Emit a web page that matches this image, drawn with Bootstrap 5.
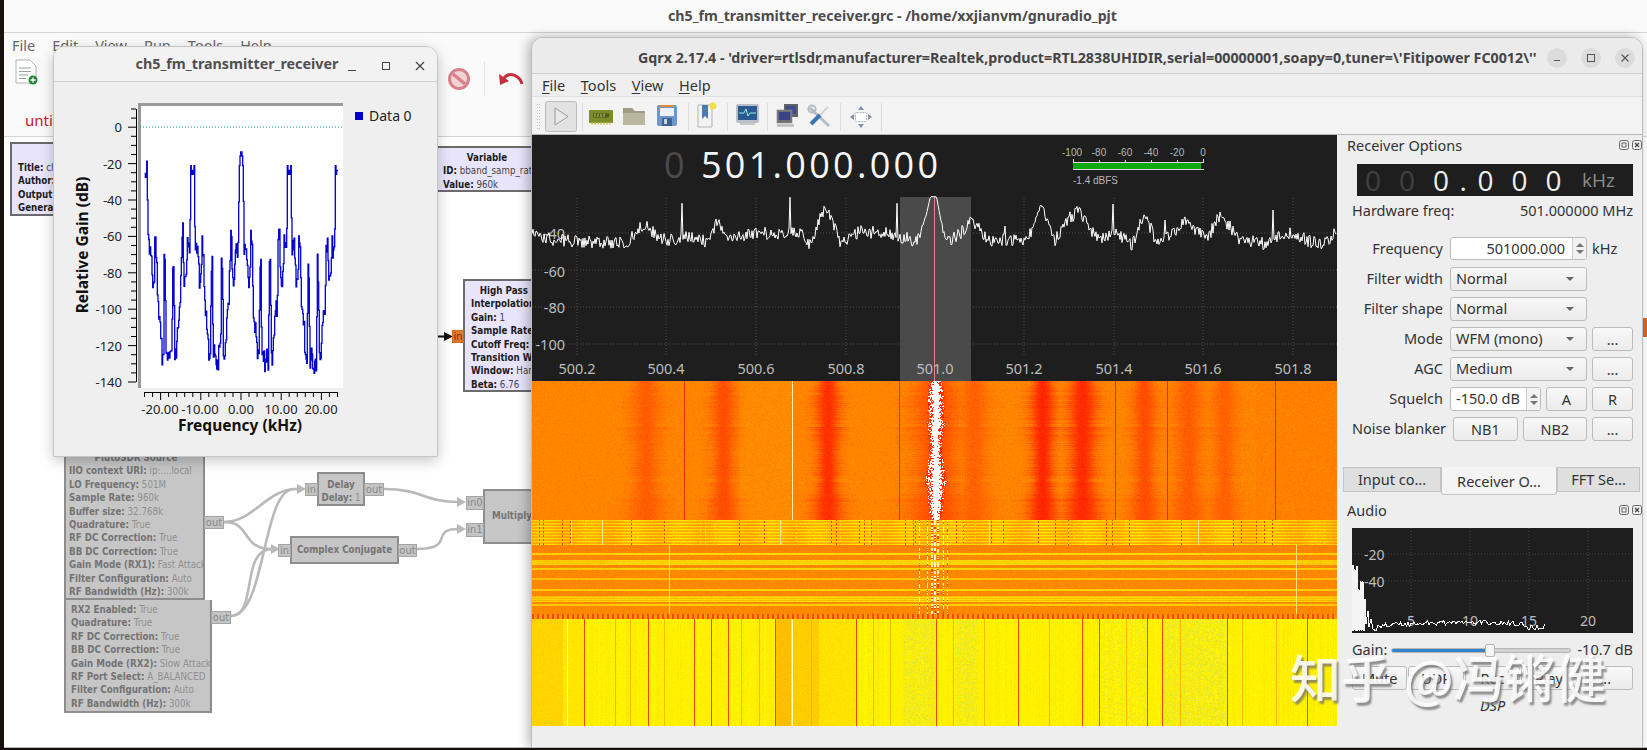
<!DOCTYPE html>
<html lang="en">
<head>
<meta charset="utf-8">
<title>Gqrx and GNU Radio</title>
<link href="https://cdn.jsdelivr.net/npm/bootstrap@5.3.0/dist/css/bootstrap.min.css" rel="stylesheet">
<style>
html,body{margin:0;height:100%;overflow:hidden;background:#18100f}
body{width:1647px;height:750px;position:relative;font-family:"Noto Sans",sans-serif;color:#3c3c3c}
/* desktop windows */
.win-grc{position:absolute;left:4px;top:0;width:1643px;height:748px;background:#fff;border-bottom:1px solid #bbb}
.win-plot{position:absolute;left:53px;top:46px;width:385px;height:411px;background:#efefef;border:1px solid #c6c6c6;border-radius:12px 12px 0 0;box-shadow:0 4px 14px rgba(0,0,0,.22);overflow:hidden}
.win-qrx{position:absolute;left:531px;top:37px;width:1112px;height:711px;background:#eeeeee;border:1px solid #bdbdbd;border-radius:12px 12px 0 0;box-shadow:-3px 0 12px rgba(0,0,0,.28);overflow:hidden;color:#2e2e2e}
/* grc chrome */
.grc-title{height:33px;background:#fafafa;border-bottom:1px solid #d4d4d4;font-size:14.2px;font-weight:700;color:#4c4c4c;padding-left:134px}
.grc-menu{height:25px;background:#fafafa;font-size:14.5px;color:#666;padding-left:8px;gap:17px}
.grc-tools{height:46px;background:#fafafa;padding-left:11px}
.grc-tabs{height:33px;background:#fafafa;border-bottom:1px solid #d4d4d4;padding-left:21px;font-size:15px;color:#c7162b}
.grc-canvas{position:relative;flex:1 1 auto;background:#fff;overflow:hidden}
.grc-sep{position:absolute;left:480px;top:62px;width:1px;height:34px;background:#e2e2e2}
.grc-ico{position:absolute}
.ico-stop{left:443px;top:67px}
.ico-undo{left:494px;top:70px}
/* flow graph blocks (free canvas; coordinates are relative to the canvas, which starts at 4,138) */
.gblock{position:absolute;background:#e8e4fb;border:2px solid #6b6b6b;font:9.7px/13.4px "DejaVu Sans Condensed","DejaVu Sans",sans-serif;font-stretch:condensed;color:#444;white-space:nowrap;overflow:hidden;padding:0 6px}
.gblock b{color:#1c1c1c}
.gblock.off{background:#c6c6c6;border-color:#8d8d8d;color:#8f8f8f}
.gblock.off b{color:#747474}
.gport{position:absolute;font:10px/11px "DejaVu Sans",sans-serif;text-align:center;background:#c4c4c4;border:1px solid #a4a4a4;color:#8a8a8a}
.gport.live{background:#e07a2f;border-color:#c96a22;color:#7a2b00}
.b-title{left:6px;top:5px;width:120px;height:74px;padding-top:17px}
.b-var{left:431px;top:9px;width:104px;height:46px;padding-top:3px;padding-left:6px;text-align:left}
.b-hp{left:459px;top:142px;width:111px;height:113px;padding-top:3px}
.b-src1{left:60px;top:309px;width:141px;height:154px;padding:3px 0 0 3px}
.b-src2{left:60px;top:463px;width:148px;height:113px;padding:3px 0 0 5px;border-top:0}
.b-delay{left:313px;top:335px;width:48px;height:34px;padding:4px 0 0;text-align:center}
.b-conj{left:286px;top:399px;width:109px;height:28px;padding:5px 0 0;text-align:center}
.b-mult{left:479px;top:352px;width:100px;height:55px;padding:18px 0 0 7px}
.centerline{display:block;text-align:center}
.p-hp{left:448px;top:193px;width:12px;height:13px}
.p-o1{left:200px;top:379px;width:20px;height:13px}
.p-o2{left:207px;top:474px;width:20px;height:13px}
.p-di{left:301px;top:346px;width:13px;height:13px}
.p-do{left:360px;top:346px;width:20px;height:13px}
.p-ci{left:274px;top:407px;width:13px;height:13px}
.p-co{left:394px;top:407px;width:19px;height:13px}
.p-m0{left:462px;top:359px;width:18px;height:14px}
.p-m1{left:462px;top:386px;width:18px;height:14px}
.wires{position:absolute;left:0;top:0}
.sliver{position:absolute;left:1643px;top:318px;width:4px;height:19px;background:#d9662a}
/* qt plot window */
.plot-head{height:35px;background:#f2f2f2;border-bottom:1px solid #d2d2d2;position:relative;font-size:14.3px;font-weight:700;color:#505050}
.plot-head>span:first-child{padding-right:17px}
.plot-head .ctl,.qrx-head .ctl{position:absolute;display:flex;align-items:center;justify-content:center}
.c1{left:288px;top:10px;width:20px;height:20px}
.c2{left:322px;top:9px;width:20px;height:20px}
.c3{left:356px;top:9px;width:20px;height:20px}
/* gqrx */
.qrx-head{height:36px;background:#ebebeb;border-bottom:1px solid #cfcfcf;position:relative;font-size:14.25px;font-weight:700;color:#444;white-space:nowrap}
.qtitle{position:absolute;left:106px;top:0;line-height:39px}
.ctl-round{width:20px;height:20px;border-radius:50%;background:#dcdcdc}
.q1{left:1015px;top:10px}
.q2{left:1049px;top:10px}
.q3{left:1083px;top:10px}
.qrx-menu{height:23px;background:#efefef;border-bottom:1px solid #e0e0e0;font-size:14.5px;padding:2px 0 0 10px;gap:15.6px;color:#333}
.qrx-menu u{text-underline-offset:2px}
.qrx-tools{height:38px;background:#f3f3f3;border-bottom:1px solid #b8b8b8;position:relative}
.qrx-tools svg{position:absolute;left:0;top:0}
.qrx-body{height:612px}
.plots{width:805px;flex:0 0 805px;background:#eeeeee;position:relative}
.spectrum{display:block;background:#1e1e1e}
.fall{display:block}
.freq-read{position:absolute;left:132px;top:10px;font-size:36px;line-height:40px;font-family:"Open Sans",sans-serif;letter-spacing:3.3px;color:#f6f6f6;white-space:nowrap}
.freq-read span{color:#4a4a4a;margin-right:13px}
/* side panel */
.side{flex:1 1 auto;padding:0 9px 0 15px;font-size:14.5px;position:relative;color:#333;min-width:0}
.dock-title{height:22px;margin-left:-5px;margin-right:-8px;position:relative}
.dock-btns{position:absolute;right:-1px;top:5px;display:flex;gap:3px}
.tune{height:32px;background:#1e1e1e;margin:7px 0 0 5px;padding:0 18px 0 8px;color:#eee;font-size:28px;font-family:"Open Sans",sans-serif;gap:18px}
.tune .dim{color:#414141}
.tune .dot{margin:0 -7.5px}
.tune .kh{color:#8c8c8c;font-size:19px;margin-left:auto}
.hw{height:30px}
.ctl-row{height:24px;margin-bottom:6px;gap:5px}
.ctl-row.r0{height:23px;margin-top:11px;margin-bottom:7px}
.ctl-row label{flex:0 0 93px;text-align:right;white-space:nowrap;padding-right:2px;direction:rtl}
.qbtn{height:100%;padding:0;border:1px solid #bcbcbc;border-radius:3px;background:linear-gradient(#f8f8f8,#ebebeb);color:#333;font-size:14.5px;line-height:1;box-shadow:none}
.qw3{flex:0 0 41px}
.qsel{flex:0 0 137px;height:100%;border:1px solid #bcbcbc;border-radius:3px;background:linear-gradient(#f8f8f8,#ebebeb);padding:0 12px 0 5px}
.qsel i{width:0;height:0;border-left:4px solid transparent;border-right:4px solid transparent;border-top:4px solid #666;margin-left:auto}
.qspin{flex:0 0 137px;height:100%;border:1px solid #bcbcbc;border-radius:3px;background:#fff;overflow:hidden}
.qspin.sq{flex:0 0 91px;padding-left:5px}
.qspin .val{flex:1 1 auto;text-align:right;padding-right:7px;white-space:nowrap}
.qspin.sq .val{text-align:left;padding:0}
.qspin .arr{flex:0 0 14px;height:100%;background:#f2f2f2;border-left:1px solid #cfcfcf;gap:3px}
.up{width:0;height:0;border-left:4px solid transparent;border-right:4px solid transparent;border-bottom:4px solid #777}
.dn{width:0;height:0;border-left:4px solid transparent;border-right:4px solid transparent;border-top:4px solid #777}
.dock-tabs{height:27px;margin:26px -7px 0 -9px;font-size:14.5px}
.qtab{background:#dfdfdf;border:1px solid #c4c4c4;height:25px;text-align:center;line-height:23px;white-space:nowrap;overflow:hidden}
.qtab.t1{flex:0 0 98px}
.qtab.t2{flex:0 0 116px;height:28px;background:#f4f4f4;line-height:28px;border-top:0;border-radius:0 0 3px 3px}
.qtab.t3{flex:0 0 83px}
.dock-title.aud{margin-top:6px}
.audio{display:block;margin-top:6px;background:#1e1e1e}
.gain{height:24px;margin-top:5px;gap:4px;white-space:nowrap}
.track{flex:0 0 180px;height:5px;border-radius:3px;background:#d2d2d2;border:1px solid #b5b5b5;position:relative}
.track .fillbar{position:absolute;left:0;top:0;bottom:0;width:53%;background:#3584c8;border-radius:3px}
.track .knob{position:absolute;left:93px;top:-5px;width:10px;height:13px;background:#f5f5f5;border:1px solid #b5b5b5;border-radius:2px}
.gain .num{margin-left:auto}
.btnrow{height:24px;margin-top:4px;gap:1px}
.btnrow .qbtn{flex:1 1 0}
.dsp{font-style:italic;text-align:center;margin-top:5px;line-height:20px}
.wmark{position:absolute;left:1290px;top:640px;font:500 51px/72px "Noto Sans CJK SC",sans-serif;color:rgba(255,255,255,.88);text-shadow:2px 3px 2px rgba(110,110,110,.75);white-space:nowrap}
.wmark span{margin-left:12px}
</style>
</head>
<body>

<!-- background window: GNU Radio Companion -->
<div class="win-grc d-flex flex-column">
  <div class="grc-title d-flex align-items-center justify-content-center">ch5_fm_transmitter_receiver.grc - /home/xxjianvm/gnuradio_pjt</div>
  <div class="grc-menu d-flex align-items-center"><span>File</span><span>Edit</span><span>View</span><span>Run</span><span>Tools</span><span>Help</span></div>
  <div class="grc-tools">
    <svg width="24" height="26" viewBox="0 0 24 26"><path d="M1 1h14l6 6v17H1z" fill="#fff" stroke="#aeb4b0"/><path d="M4 9h12M4 12.500h12M4 16h9M4 19.500h7" stroke="#9aa19c"/><circle cx="18" cy="21" r="4.500" fill="#1f8a3a"/><path d="M15.500 21h5M18 18.500v5" stroke="#fff" stroke-width="1.300"/></svg>
  </div>
  <div class="grc-tabs d-flex align-items-center">untitled</div>
  <div class="grc-canvas">
    <svg class="wires" width="600" height="610" viewBox="0 0 600 610" fill="none">
      <g stroke="#b9b9b9" stroke-width="2.600">
        <path d="M220 385C250 385 262 352 293 352"/>
        <path d="M220 385C248 385 236 412 268 412"/>
        <path d="M227 479C262 479 258 352 290 352"/>
        <path d="M227 479C254 479 236 412 268 412"/>
        <path d="M380 352C418 352 420 365 454 365"/>
        <path d="M413 412C452 412 425 392 454 392"/>
      </g>
      <g fill="#b9b9b9">
        <path d="M293 347l9 5-9 5zM267 407l9 5-9 5zM453 360l9 5-9 5zM453 387l9 5-9 5z"/>
      </g>
      <path d="M434 199.500h8" stroke="#111" stroke-width="2"/><path d="M440 195l9 4.500-9 4.500z" fill="#111"/>
    </svg>
    <div class="gblock b-title"><b>Title:</b> ch5_fm_transmitter<br><b>Author:</b> xxjian<br><b>Output Options:</b> QT GUI<br><b>Generate Options:</b> ok</div>
    <div class="gblock b-var"><b class="centerline">Variable</b><b>ID:</b> bband_samp_rate<br><b>Value:</b> 960k</div>
    <div class="gblock b-hp"><b class="centerline">High Pass Filter</b><b>Interpolation:</b> 1<br><b>Gain:</b> 1<br><b>Sample Rate:</b> 960k<br><b>Cutoff Freq:</b> 1k<br><b>Transition Width:</b> 100<br><b>Window:</b> Hamming<br><b>Beta:</b> 6.76</div>
    <div class="gport live p-hp">in</div>
    <div class="gblock off b-src1"><b class="centerline">PlutoSDR Source</b><b>IIO context URI:</b> ip:....local<br><b>LO Frequency:</b> 501M<br><b>Sample Rate:</b> 960k<br><b>Buffer size:</b> 32.768k<br><b>Quadrature:</b> True<br><b>RF DC Correction:</b> True<br><b>BB DC Correction:</b> True<br><b>Gain Mode (RX1):</b> Fast Attack<br><b>Filter Configuration:</b> Auto<br><b>RF Bandwidth (Hz):</b> 300k</div>
    <div class="gblock off b-src2"><b>RX2 Enabled:</b> True<br><b>Quadrature:</b> True<br><b>RF DC Correction:</b> True<br><b>BB DC Correction:</b> True<br><b>Gain Mode (RX2):</b> Slow Attack<br><b>RF Port Select:</b> A_BALANCED<br><b>Filter Configuration:</b> Auto<br><b>RF Bandwidth (Hz):</b> 300k</div>
    <div class="gport p-o1">out</div><div class="gport p-o2">out</div>
    <div class="gblock off b-delay"><b class="centerline">Delay</b><b>Delay:</b> 1</div>
    <div class="gport p-di">in</div><div class="gport p-do">out</div>
    <div class="gblock off b-conj"><b>Complex Conjugate</b></div>
    <div class="gport p-ci">in</div><div class="gport p-co">out</div>
    <div class="gblock off b-mult"><b>Multiply</b></div>
    <div class="gport p-m0">in0</div><div class="gport p-m1">in1</div>
  </div>
  <div class="grc-sep"></div>
  <svg class="grc-ico ico-stop" width="24" height="24" viewBox="0 0 24 24"><circle cx="12" cy="12" r="9.500" fill="#f1d3d6" stroke="#d9808b" stroke-width="3"/><path d="M6 7l12 10" stroke="#d9808b" stroke-width="3.500"/></svg>
  <svg class="grc-ico ico-undo" width="26" height="18" viewBox="0 0 26 18"><path d="M24 14C22 6 12 1 6 8" fill="none" stroke="#c7303c" stroke-width="3"/><path d="M1 4l1 11 9-4z" fill="#c7303c"/></svg>
</div>
<div class="sliver"></div>

<!-- QT GUI frequency sink window -->
<div class="win-plot">
  <div class="plot-head d-flex align-items-center">
    <span class="ms-auto me-auto">ch5_fm_transmitter_receiver</span>
    <span class="ctl c1"><svg width="10" height="10"><path d="M1 8.500h8" stroke="#444"/></svg></span>
    <span class="ctl c2"><svg width="10" height="10"><rect x="1.500" y="1.500" width="7" height="7" fill="none" stroke="#444"/></svg></span>
    <span class="ctl c3"><svg width="10" height="10"><path d="M1 1l8 8M9 1l-8 8" stroke="#444" stroke-width="1.200"/></svg></span>
  </div>
  <svg id="psd" width="383" height="374" viewBox="54 82 383 374">
    <rect x="138" y="103" width="205" height="285" fill="#fff"/>
    <path d="M139.500 104V388M138 104.500H343" stroke="#9a9a9a" stroke-width="3" fill="none"/>
    <path d="M140 127H343" stroke="#0a8a8a" stroke-dasharray="1 2"/>
    <path id="psdTicks" stroke="#000" fill="none"/>
    <path id="psdTrace" fill="none" stroke="#0000cf" stroke-width="1.300"/>
    <g font-family="Noto Sans,sans-serif" font-size="13" fill="#222" text-anchor="end">
      <text x="122" y="132">0</text><text x="122" y="169">-20</text><text x="122" y="205">-40</text><text x="122" y="241">-60</text><text x="122" y="278">-80</text><text x="122" y="314">-100</text><text x="122" y="351">-120</text><text x="122" y="387">-140</text>
    </g>
    <g font-family="Noto Sans,sans-serif" font-size="13" fill="#222" text-anchor="middle">
      <text x="160" y="414">-20.00</text><text x="200" y="414">-10.00</text><text x="241" y="414">0.00</text><text x="281" y="414">10.00</text><text x="321" y="414">20.00</text>
    </g>
    <text transform="translate(88 245) rotate(-90)" text-anchor="middle" font-family="Noto Sans,sans-serif" font-weight="700" font-size="15.500" fill="#111">Relative Gain (dB)</text>
    <text x="240" y="431" text-anchor="middle" font-family="Noto Sans,sans-serif" font-weight="700" font-size="15.500" fill="#111">Frequency (kHz)</text>
    <rect x="355" y="112" width="8" height="8" fill="#0000cf"/>
    <text x="369" y="121" font-family="Noto Sans,sans-serif" font-size="14" fill="#222">Data 0</text>
  </svg>
</div>

<!-- Gqrx window -->
<div class="win-qrx d-flex flex-column">
  <div class="qrx-head">
    <span class="qtitle">Gqrx 2.17.4 - 'driver=rtlsdr,manufacturer=Realtek,product=RTL2838UHIDIR,serial=00000001,soapy=0,tuner=\'Fitipower FC0012\''</span>
    <span class="ctl ctl-round q1"><svg width="10" height="10"><path d="M2 7.500h6" stroke="#555"/></svg></span>
    <span class="ctl ctl-round q2"><svg width="10" height="10"><rect x="1.500" y="1.500" width="7" height="7" fill="none" stroke="#555"/></svg></span>
    <span class="ctl ctl-round q3"><svg width="10" height="10"><path d="M1.500 1.500l7 7M8.500 1.500l-7 7" stroke="#555" stroke-width="1.100"/></svg></span>
  </div>
  <div class="qrx-menu d-flex align-items-center"><span><u>F</u>ile</span><span><u>T</u>ools</span><span><u>V</u>iew</span><span><u>H</u>elp</span></div>
  <div class="qrx-tools">
    <svg width="360" height="37" viewBox="532 97 360 37">
      <path d="M537.500 104v26M539.500 104v26" stroke="#c4c4c4" stroke-dasharray="1 2"/>
      <rect x="545.500" y="101.500" width="31" height="30" rx="2" fill="#e2e2e2" stroke="#bcbcbc"/>
      <path d="M555 108l13 8.500-13 8.500z" fill="#e9e9e9" stroke="#9b9b9b"/>
      <path d="M582.500 103v28M688.500 103v28M727.500 103v28M767.500 103v28M840.500 103v28M881.500 103v28" stroke="#dcdcdc"/>
      <!-- SDR board -->
      <rect x="589" y="110" width="24" height="13" rx="1" fill="#7c8c2a"/><path d="M593 113.500h16v4h-16z" fill="#4f5a16"/><path d="M591 123.500h20" stroke="#d8d06a" stroke-dasharray="2 1" stroke-width="2"/><path d="M595 114v3M598 114v3M601 114v3M604 114v3" stroke="#c7cf8a"/>
      <!-- folder -->
      <path d="M623 108h9l3 3h10v13a1 1 0 0 1-1 1h-20a1 1 0 0 1-1-1z" fill="#a09c84"/><path d="M623 113h22v11a1 1 0 0 1-1 1h-20a1 1 0 0 1-1-1z" fill="#b9b6a0"/>
      <!-- floppy -->
      <rect x="657" y="105" width="20" height="21" rx="2" fill="#6b97cc"/><rect x="660" y="105" width="14" height="2" fill="#e08a3a"/><rect x="660" y="108" width="14" height="8" fill="#eef2f6"/><rect x="662" y="118" width="10" height="8" fill="#3f638f"/><rect x="664" y="119" width="3" height="5" fill="#c9d4e2"/>
      <!-- bookmarks -->
      <path d="M698 105h14v22h-14z" fill="#f2f2f2" stroke="#b4b4b4"/><path d="M702 105h6v14l-3-3-3 3z" fill="#4b7bb4"/><circle cx="713" cy="106" r="3.500" fill="#f1df4a"/>
      <!-- monitor -->
      <rect x="736" y="104" width="23" height="19" rx="2" fill="#b9c0c8"/><rect x="738" y="106" width="19" height="14" fill="#2b5b8e"/><path d="M739 113h5l2-4 2 7 2-3h6" fill="none" stroke="#8ff0e0"/><rect x="740" y="123" width="15" height="2" fill="#c8c8c8"/>
      <!-- network computers -->
      <rect x="784" y="104" width="14" height="13" fill="#5e6368"/><rect x="786" y="106" width="10" height="8" fill="#414a8c"/><rect x="777" y="110" width="15" height="13" fill="#6d7277" stroke="#8a8a8a" stroke-width=".6"/><rect x="779" y="112" width="11" height="8" fill="#3a428a"/><rect x="777" y="124" width="17" height="3" fill="#c5c5c5"/>
      <!-- tools -->
      <path d="M810 108l19 18" stroke="#b5bcc4" stroke-width="3"/><circle cx="812" cy="109" r="3.600" fill="none" stroke="#b5bcc4" stroke-width="2"/><path d="M828 107l-8 8" stroke="#d2d2d2" stroke-width="2"/><path d="M820 115l-9 9" stroke="#3c74b4" stroke-width="4"/>
      <!-- fullscreen arrows -->
      <rect x="855.500" y="112.500" width="11" height="9" rx="1" fill="#fff" stroke="#a8b2bc" stroke-dasharray="2 1"/><path d="M861 106l3 4h-6zM861 128l3-4h-6zM850 117l4-3v6zM872 117l-4-3v6z" fill="#7f93a8"/>
    </svg>
  </div>
  <div class="qrx-body d-flex">
    <div class="plots">
      <svg class="spectrum" id="spec" width="805" height="246" viewBox="532 135 805 246">
        <rect x="900" y="197" width="71" height="184" fill="#4a4a4a"/>
        <path id="specGrid" stroke="#4c4c4c" stroke-dasharray="1 2" fill="none"/>
        <path d="M934.500 197V381" stroke="#e98484"/>
        <g font-family="Noto Sans,sans-serif" font-size="14.500" fill="#bdbdbd">
          <text x="565" y="239" text-anchor="end">-40</text><text x="565" y="277" text-anchor="end">-60</text><text x="565" y="313" text-anchor="end">-80</text><text x="565" y="350" text-anchor="end">-100</text>
          <g text-anchor="middle"><text x="577" y="374">500.2</text><text x="666" y="374">500.4</text><text x="756" y="374">500.6</text><text x="846" y="374">500.8</text><text x="935" y="374">501.0</text><text x="1024" y="374">501.2</text><text x="1114" y="374">501.4</text><text x="1203" y="374">501.6</text><text x="1293" y="374">501.8</text></g>
        </g>
        <path id="specTrace" fill="none" stroke="#fff" stroke-width="1"/>
        <g font-family="Liberation Sans,sans-serif" font-size="10" fill="#b8b8b8" text-anchor="middle">
          <text x="1072" y="156">-100</text><text x="1099" y="156">-80</text><text x="1125" y="156">-60</text><text x="1151" y="156">-40</text><text x="1177" y="156">-20</text><text x="1203" y="156">0</text>
          <text x="1073" y="184" text-anchor="start">-1.4 dBFS</text>
        </g>
        <path d="M1073.500 159v4M1099.500 160v3M1125.500 160v3M1151.500 160v3M1177.500 160v3M1203.500 159v4M1073 162.500H1204M1073 169.500H1204" stroke="#d8d8d8" fill="none"/>
        <rect x="1073" y="163" width="128" height="6" fill="#0fa80f"/>
      </svg>
      <canvas class="fall" id="fall" width="805" height="345"></canvas>
      <div class="freq-read"><span>0</span>501.000.000</div>
    </div>
    <div class="side">
      <div class="dock-title d-flex align-items-center">Receiver Options
        <div class="dock-btns">
          <svg width="10" height="10"><rect x=".5" y=".5" width="9" height="9" rx="2" fill="none" stroke="#666"/><rect x="3" y="3" width="4" height="4" fill="none" stroke="#666"/></svg>
          <svg width="10" height="10"><rect x=".5" y=".5" width="9" height="9" rx="2" fill="none" stroke="#666"/><path d="M3 3l4 4M7 3l-4 4" stroke="#444" stroke-width="1.200"/></svg>
        </div>
      </div>
      <div class="tune d-flex align-items-center"><span class="dim">0</span><span class="dim">0</span><span>0</span><span class="dot">.</span><span>0</span><span>0</span><span>0</span><span class="kh">kHz</span></div>
      <div class="hw d-flex align-items-center justify-content-between"><span>Hardware freq:</span><span>501.000000 MHz</span></div>
      <div class="ctl-row r0 d-flex align-items-center"><label>Frequency</label><div class="qspin d-flex align-items-center"><span class="val">501000.000</span><span class="arr d-flex flex-column align-items-center justify-content-center"><i class="up"></i><i class="dn"></i></span></div><span>kHz</span></div>
      <div class="ctl-row d-flex align-items-center"><label>Filter width</label><div class="qsel d-flex align-items-center"><span>Normal</span><i></i></div></div>
      <div class="ctl-row d-flex align-items-center"><label>Filter shape</label><div class="qsel d-flex align-items-center"><span>Normal</span><i></i></div></div>
      <div class="ctl-row d-flex align-items-center"><label>Mode</label><div class="qsel d-flex align-items-center"><span>WFM (mono)</span><i></i></div><button class="btn qbtn qw3 ms-auto">...</button></div>
      <div class="ctl-row d-flex align-items-center"><label>AGC</label><div class="qsel d-flex align-items-center"><span>Medium</span><i></i></div><button class="btn qbtn qw3 ms-auto">...</button></div>
      <div class="ctl-row d-flex align-items-center"><label>Squelch</label><div class="qspin sq d-flex align-items-center"><span class="val">-150.0 dB</span><span class="arr d-flex flex-column align-items-center justify-content-center"><i class="up"></i><i class="dn"></i></span></div><button class="btn qbtn qw3">A</button><button class="btn qbtn qw3">R</button></div>
      <div class="ctl-row d-flex align-items-center"><label>Noise blanker</label><button class="btn qbtn flex-fill">NB1</button><button class="btn qbtn flex-fill">NB2</button><button class="btn qbtn qw3">...</button></div>
      <div class="dock-tabs d-flex align-items-start"><div class="qtab t1">Input co...</div><div class="qtab t2">Receiver O...</div><div class="qtab t3">FFT Se...</div></div>
      <div class="dock-title aud d-flex align-items-center">Audio
        <div class="dock-btns">
          <svg width="10" height="10"><rect x=".5" y=".5" width="9" height="9" rx="2" fill="none" stroke="#666"/><rect x="3" y="3" width="4" height="4" fill="none" stroke="#666"/></svg>
          <svg width="10" height="10"><rect x=".5" y=".5" width="9" height="9" rx="2" fill="none" stroke="#666"/><path d="M3 3l4 4M7 3l-4 4" stroke="#444" stroke-width="1.200"/></svg>
        </div>
      </div>
      <svg class="audio" id="aud" width="281" height="105" viewBox="1352 529 281 105">
        <path d="M1352 555H1633M1352 582H1633M1411 529V634M1470 529V634M1529 529V634M1588 529V634" stroke="#474747" stroke-dasharray="1 2"/>
        <g font-family="Noto Sans,sans-serif" font-size="14" fill="#bdbdbd">
          <text x="1364" y="561">-20</text><text x="1364" y="588">-40</text>
          <g text-anchor="middle"><text x="1411" y="627">5</text><text x="1470" y="627">10</text><text x="1529" y="627">15</text><text x="1588" y="627">20</text></g>
        </g>
        <path id="audTrace" fill="none" stroke="#f4f4f4" shape-rendering="crispEdges"/>
      </svg>
      <div class="gain d-flex align-items-center"><span>Gain:</span><div class="track"><div class="fillbar"></div><div class="knob"></div></div><span class="num">-10.7 dB</span></div>
      <div class="btnrow d-flex"><button class="btn qbtn">Mute</button><button class="btn qbtn">UDP</button><button class="btn qbtn">Rec</button><button class="btn qbtn">Play</button><button class="btn qbtn">...</button></div>
      <div class="dsp">DSP</div>
    </div>
  </div>
</div>

<div class="wmark">知乎<span>@冯锵健</span></div>

<script src="https://cdn.jsdelivr.net/npm/bootstrap@5.3.0/dist/js/bootstrap.bundle.min.js"></script>
<script>
(function(){
  var seed=12345;
  function R(){seed=(seed*1664525+1013904223)>>>0;return seed/4294967296;}
  function lerpTable(t,x){
    for(var i=1;i<t.length;i++){if(x<=t[i][0]){var a=t[i-1],b=t[i];var f=(x-a[0])/(b[0]-a[0]||1);return a[1]+(b[1]-a[1])*f;}}
    return t[t.length-1][1];
  }
  // --- frequency sink
  var tk='';
  for(var i=0;i<=30;i++){var y=109+i*9.1;tk+='M'+(i%4==2?128:131)+' '+y.toFixed(1)+'H136 ';}
  tk+='M136.500 109V382 ';
  for(var k=-12;k<=12;k++){var x=241+k*8.04;tk+='M'+x.toFixed(1)+' 392V'+(k%5==0?400:397)+' ';}
  tk+='M144 392.500H337';
  document.getElementById('psdTicks').setAttribute('d',tk);
  var half=[[0,0],[3,20],[6,60],[8,280],[12,310],[15,270],[18,340],[22,410],[26,380],[29,240],[33,270],[36,440],[40,480],[45,540],[50,620],[54,610],[56,340],[59,340],[62,600],[68,610],[72,650]];
  var peaks=[[316,250],[457,235],[603,180],[747,235],[891,235]];
  var d='',first=true;
  for(var zx=314;zx<=892;zx+=2){
    var best=1e9,bp=null;peaks.forEach(function(p){var q=Math.abs(zx-p[0]);if(q<best){best=q;bp=p;}});
    var base=lerpTable(half,Math.min(best,72));
    var zy=best<4?bp[1]+best*6:180+base;
    if(best>=6&&best<8)zy=bp[1]+(best-5)*80;
    zy+=best>6?(R()-.5)*55:0;
    if(best>30&&R()<.12)zy+=35;
    if(zy>850)zy=850;
    var px=40+zx/3,py=90+zy/3;
    d+=(first?'M':'L')+px.toFixed(1)+' '+py.toFixed(1)+'H'+(px+.66).toFixed(1);first=false;
  }
  document.getElementById('psdTrace').setAttribute('d',d);
  // --- spectrum
  var g='';
  [577,666,756,846,935,1024,1114,1203,1293].forEach(function(x){g+='M'+x+' 198V355';});
  [233,270,307,344].forEach(function(y){g+='M532 '+y+'H1337';});
  document.getElementById('specGrid').setAttribute('d',g);
  var sp=[[0,130],[50,150],[190,160],[205,125],[225,100],[240,130],[260,150],[310,140],[340,155],[365,90],[385,150],[430,130],[490,130],[520,125],[545,165],[570,50],[590,110],[600,155],[640,125],[700,130],[750,155],[765,90],[775,20],[787,20],[800,130],[805,160],[830,135],[855,95],[890,150],[965,150],[985,45],[1005,100],[1015,155],[1045,85],[1065,60],[1080,110],[1100,150],[1140,130],[1165,170],[1190,70],[1215,165],[1240,130],[1270,95],[1310,150],[1335,75],[1355,110],[1370,145],[1420,160],[1470,130],[1530,165],[1561,130]];
  var sk={295:40,503:22,711:40,920:108,1128:42,1230:90,1438:60};
  d='';first=true;
  for(var x2=532;x2<=1336;x2+=1){
    var z=(x2-530)*1.936;
    var yy=lerpTable(sp,z);
    var j=(z>765&&z<795)?0:(R()-.5)*38;
    yy+=j;
    for(var s in sk){if(Math.abs(z-s)<1.2)yy=sk[s];}
    yy=Math.max(yy,18);
    d+=(first?'M':'L')+x2.toFixed(1)+' '+(190+yy/3).toFixed(1);first=false;
  }
  document.getElementById('specTrace').setAttribute('d',d);
  // --- audio
  d='M1352 632';
  var spikes=[[1353,566],[1354,632],[1355,570],[1356,632],[1357,567],[1358,632],[1359,590],[1360,632],[1361,582],[1362,632],[1363,582],[1364,632],[1365,600],[1366,625],[1368,612],[1369,628],[1371,620],[1373,630],[1376,632]];
  spikes.forEach(function(p){d+='L'+p[0]+' '+p[1];});
  for(var ax=1378;ax<1546;ax+=1.5){
    var ay=629-Math.sin((ax-1378)/168*3.14)*3-R()*5;
    if(ax>1525)ay=631-R()*6;
    d+='L'+ax+' '+ay.toFixed(1);
  }
  document.getElementById('audTrace').setAttribute('d',d);
  // --- waterfall
  var c=document.getElementById('fall'),ctx=c.getContext('2d');
  ctx.fillStyle='#eeeeee';ctx.fillRect(0,0,805,345);
  var W=805,H=345,im=ctx.getImageData(0,0,W,H),P=im.data;
  function set(x,y,r,g,b){var o=(y*W+x)*4;P[o]=r;P[o+1]=g;P[o+2]=b;P[o+3]=255;}
  var bands=[[220,.4,24],[370,.55,20],[572,.85,20],[782,.55,38],[855,.35,24],[988,.95,20],[1065,.9,24],[1185,.55,20],[1270,.4,24],[1340,.35,20]];
  var redThin=[295,711,1128,1230,1438],whiteThin=[504];
  var mod=[];for(var yy2=0;yy2<140;yy2++){mod.push(.9+.3*Math.sin(yy2/16)+(R()-.5)*.45+(yy2>45&&yy2<95?.35:0)+(yy2>115?.25:0));}
  for(var y3=0;y3<139;y3++){
    for(var x3=0;x3<W;x3++){
      var zz=x3*1.936,iv=0;
      for(var b3=0;b3<bands.length;b3++){var dd=(zz-bands[b3][0])/(bands[b3][2]*mod[y3]);iv=Math.max(iv,bands[b3][1]*Math.exp(-dd*dd));}
      var gg=132-100*iv+(R()-.5)*18+(zz>400&&zz<500?6:0)-(zz>1400?4:0);
      var col=[255,gg,0];
      var cx=Math.abs(zz-781);
      var wid=8+5*Math.sin(y3/14)+(R()*5)+((y3>40&&y3<105)?6:0);
      if(cx<wid){if(R()<1.2-cx/wid)col=[255,255,255];else col=[255,40,0];}
      set(x3,y3,col[0],col[1],col[2]);
    }
    redThin.forEach(function(t){set(Math.round(t/1.936),y3,230,50,0);});
    whiteThin.forEach(function(t){set(Math.round(t/1.936),y3,255,240,170);});
  }
  // middle streak section
  var lvl=[];
  for(var r4=0;r4<97;r4++){
    var L=.1;
    if(r4<25)L=(r4%3==0?.95:(r4%3==1?.55:.4));
    else if(r4<32)L=.05;
    if(r4==33||r4==34)L=.9;
    if(r4>=40&&r4<45)L=.85;
    if(r4==48||r4==49)L=.85;
    if(r4==58||r4==59)L=.7;
    if(r4==69||r4==70)L=.85;
    if(r4>=76&&r4<82)L=(r4%2?.95:.6);
    if(r4==84||r4==85)L=.8;
    lvl.push(L);
  }
  var vy=[265,1480],vTop=[75,135,480,885,1290],vCenter=[750,765,772,778,785,795,803];
  var ticks=[];for(var t0=0;t0<70;t0++){ticks.push(Math.floor(R()*W));}
  for(var y5=0;y5<99;y5++){
    var yr=139+y5;
    for(var x5=0;x5<W;x5++){
      var zz5=x5*1.936,L5=y5<97?lvl[y5]:0;
      var amp=(zz5<160||zz5>1480)?.9:1;
      var g5=126+L5*amp*100+(R()-.5)*16;
      if(y5<25)g5+=(Math.sin(zz5/14)*10);
      if(y5>=94){g5=(x5%5<2)?70:150;}
      set(x5,yr,255,Math.min(g5,255),0);
    }
    if(y5<25){ticks.forEach(function(t,i){if((y5+i)%4<2)set(t,yr,i%2?225:255,i%2?75:215,0);});vTop.forEach(function(t){set(Math.round(t/1.936),yr,255,230,140);});}
    if(y5>=25&&y5<94)vy.forEach(function(t){set(Math.round(t/1.936),yr,255,225,120);});
    if(y5<94)vCenter.forEach(function(t){if((y5%7)<5){var q=Math.round(t/1.936),w=R()<.7;set(q,yr,255,w?250:70,w?205:0);if(t>770&&t<790)set(q+1,yr,255,w?245:60,w?160:0);}});
  }
  // lower yellow section
  var colBase=[];
  for(var x6=0;x6<W;x6++){var z6=x6*1.936;var g6=240+(R()-.5)*10;
    if(z6<60)g6=212;else if(z6<100)g6=230;
    if(z6>470&&z6<500)g6=190;if(z6>505&&z6<555)g6=205;if(z6>555&&z6<625)g6=226;
    colBase.push(g6);}
  var red6=[100,225,313,347,380,470,627,783,940,1065,1098,1190,1220,1345,1500],faint=[160,190,255,405,440,540,660,693,815,875,1000,1150,1255,1375,1440];
  for(var y7=238;y7<345;y7++){
    for(var x7=0;x7<W;x7++){
      var z7=x7*1.936,rr=255,gr=colBase[x7]+(R()-.5)*14,bl=0;
      var grn=(z7>720&&z7<780)||(z7>820&&z7<860)||(z7>1100&&z7<1190&&R()<.5)||(z7>1220&&z7<1340);
      if(grn&&R()<.55){rr=225+R()*22;gr=228+R()*10;bl=25+R()*25;}
      set(x7,y7,rr,gr,bl);
    }
    red6.forEach(function(t){set(Math.round(t/1.936),y7,240,70,0);});
    faint.forEach(function(t){set(Math.round(t/1.936),y7,250,185,0);});
    set(Math.round(67/1.936),y7,255,250,220);set(Math.round(504/1.936),y7,255,250,190);
  }
  ctx.putImageData(im,0,0);
})();
</script>
</body>
</html>
